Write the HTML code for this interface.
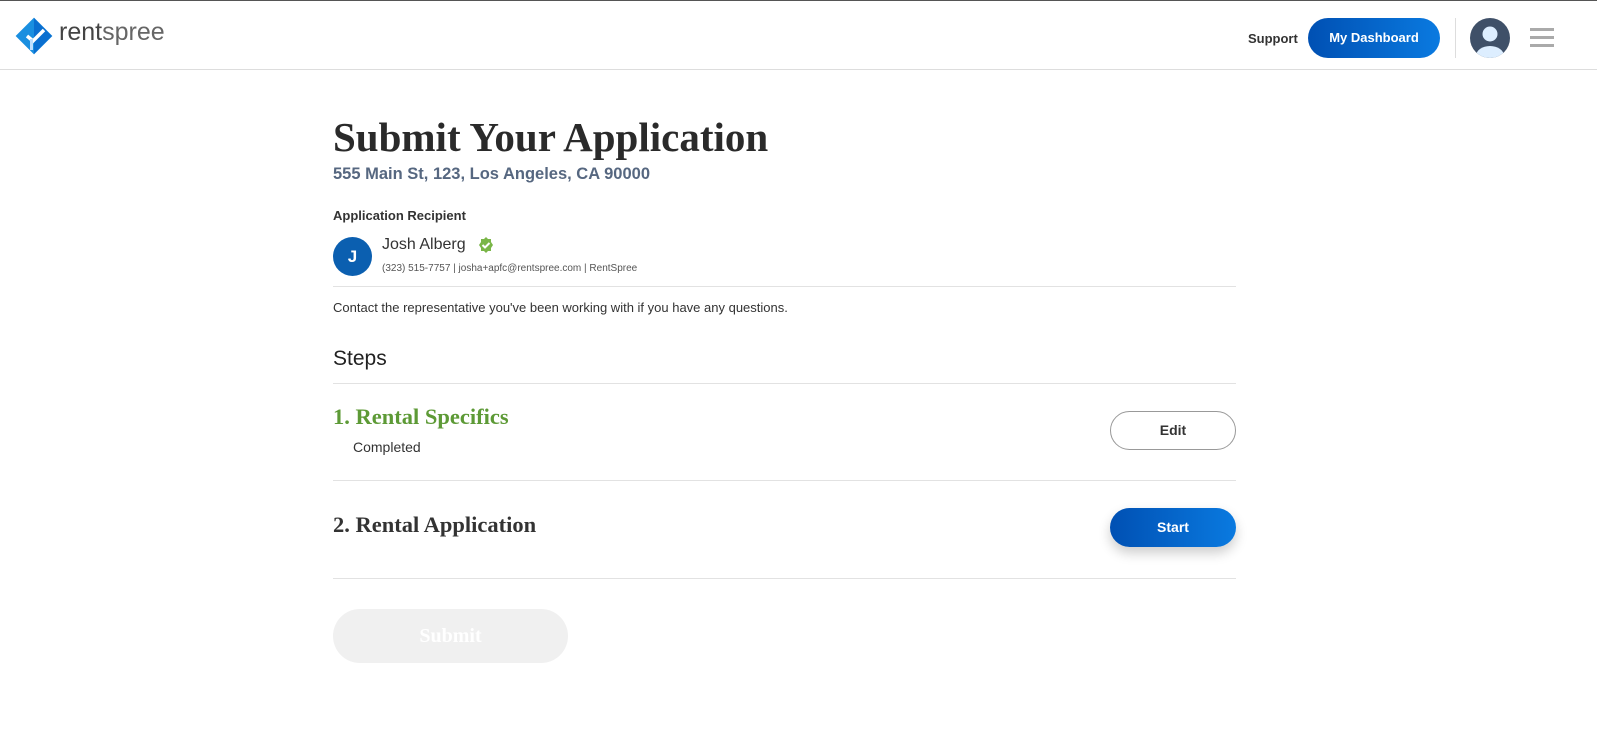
<!DOCTYPE html><html><head><style>
*{margin:0;padding:0;box-sizing:border-box}
body{width:1597px;height:736px;background:#fff;font-family:"Liberation Sans",sans-serif;color:#333;position:relative;overflow:hidden}
.hdr{position:absolute;top:0;left:0;width:1597px;height:70px;border-top:1px solid #555;border-bottom:1px solid #ddd}
.a{position:absolute}
.serif{font-family:"Liberation Serif",serif;font-weight:bold}
.line{position:absolute;left:333px;width:903px;height:1px;background:#e2e2e2}
</style></head><body>
<div class="hdr">
 <svg class="a" style="left:15px;top:16px" width="38" height="38" viewBox="0 0 38 38">
  <rect x="6" y="6" width="26" height="26" transform="rotate(45 19 19)" fill="#1a8fe0"/>
  <polygon points="19,1 37,19 19,37" fill="#0a6fd0"/>
  <path d="M12 19 l6 5 l11 -11" stroke="#fff" stroke-width="3.5" fill="none"/>
  <rect x="15" y="22" width="3" height="11" fill="#bfe0ff"/>
 </svg>
 <div class="a" style="left:59px;top:17px;font-size:25px;color:#444"><span style="color:#444">rent</span><span style="color:#666">spree</span></div>
 <div class="a" style="left:1248px;top:30px;font-size:13px;font-weight:bold;color:#333">Support</div>
 <div class="a" style="left:1308px;top:17px;width:132px;height:40px;border-radius:20px;background:linear-gradient(90deg,#0050b3,#0a7ae0);color:#fff;font-size:13px;font-weight:bold;text-align:center;line-height:40px">My Dashboard</div>
 <div class="a" style="left:1455px;top:17px;width:1px;height:40px;background:#ddd"></div>
 <svg class="a" style="left:1470px;top:17px" width="40" height="40" viewBox="0 0 40 40"><defs><clipPath id="c"><circle cx="20" cy="20" r="20"/></clipPath></defs><circle cx="20" cy="20" r="20" fill="#3f5068"/><g clip-path="url(#c)"><circle cx="20" cy="16" r="7.5" fill="#ddeeff"/><ellipse cx="20" cy="38" rx="14" ry="10" fill="#ddeeff"/></g></svg>
 <div class="a" style="left:1530px;top:27px;width:24px;height:3px;background:#aaa;box-shadow:0 8px 0 #aaa,0 16px 0 #aaa"></div>
</div>
<div class="a serif" style="left:333px;top:113px;font-size:41px;color:#2a2a2a">Submit Your Application</div>
<div class="a" style="left:333px;top:165px;font-size:16.5px;font-weight:bold;color:#566780">555 Main St, 123, Los Angeles, CA 90000</div>
<div class="a" style="left:333px;top:208px;font-size:13px;font-weight:bold;color:#333">Application Recipient</div>
<div class="a" style="left:333px;top:237px;width:39px;height:39px;border-radius:50%;background:#0b5fb0;color:#fff;font-weight:bold;font-size:17px;text-align:center;line-height:39px">J</div>
<div class="a" style="left:382px;top:236px;font-size:16px;color:#333">Josh Alberg</div>
<svg class="a" style="left:478px;top:237px" width="16" height="16" viewBox="0 0 16 16"><path d="M8 0l2 2 3 0 0 3 2 3-2 3 0 3-3 0-2 2-2-2-3 0 0-3-2-3 2-3 0-3 3 0z" fill="#7ab648"/><path d="M4.5 8l2.5 2.5 4.5-4.5" stroke="#fff" stroke-width="2" fill="none"/></svg>
<div class="a" style="left:382px;top:263px;font-size:10px;color:#555">(323) 515-7757 | josha+apfc@rentspree.com | RentSpree</div>
<div class="line" style="top:286px"></div>
<div class="a" style="left:333px;top:300px;font-size:13px;color:#333">Contact the representative you've been working with if you have any questions.</div>
<div class="a" style="left:333px;top:347px;font-size:21px;color:#222">Steps</div>
<div class="line" style="top:383px"></div>
<div class="a serif" style="left:333px;top:404px;font-size:22.5px;color:#5d9a36">1. Rental Specifics</div>
<div class="a" style="left:353px;top:439px;font-size:14px;color:#333">Completed</div>
<div class="a" style="left:1110px;top:411px;width:126px;height:39px;border:1px solid #999;border-radius:20px;text-align:center;line-height:37px;font-size:14px;font-weight:bold;color:#333">Edit</div>
<div class="line" style="top:480px"></div>
<div class="a serif" style="left:333px;top:512px;font-size:22.5px;color:#333">2. Rental Application</div>
<div class="a" style="left:1110px;top:508px;width:126px;height:39px;border-radius:20px;background:linear-gradient(90deg,#0050b3,#0a7ae0);text-align:center;line-height:39px;font-size:14px;font-weight:bold;color:#fff;box-shadow:0 6px 12px rgba(0,0,0,.2)">Start</div>
<div class="line" style="top:578px"></div>
<div class="a serif" style="left:333px;top:609px;width:235px;height:54px;border-radius:27px;background:#f0f0f0;color:#fff;font-size:20px;text-align:center;line-height:54px">Submit</div>
</body></html>
